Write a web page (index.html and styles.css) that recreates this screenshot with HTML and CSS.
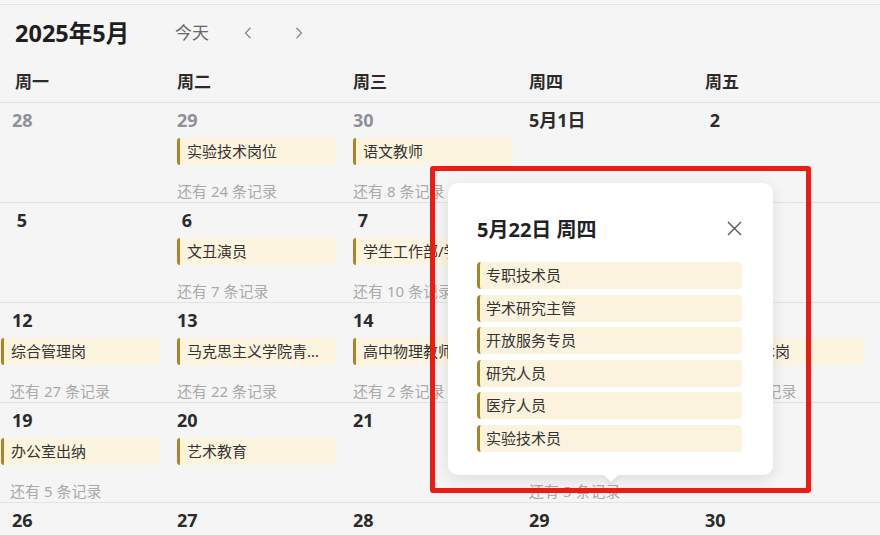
FILE: index.html
```html
<!DOCTYPE html>
<html lang="zh-CN">
<head>
<meta charset="utf-8">
<title>2025年5月</title>
<link rel="stylesheet" href="styles.css">
</head>
<body>
<div class="page">
  <header class="toolbar">
    <h1 class="title">2025年5月</h1>
    <button class="today">今天</button>
    <button class="nav nav-prev" aria-label="上一月">
      <svg width="8" height="12" viewBox="0 0 8 12"><path d="M6.5 0.8 L1.5 6 L6.5 11.2" fill="none" stroke="#8a8a8a" stroke-width="1.3"/></svg>
    </button>
    <button class="nav nav-next" aria-label="下一月">
      <svg width="8" height="12" viewBox="0 0 8 12"><path d="M1.5 0.8 L6.5 6 L1.5 11.2" fill="none" stroke="#8a8a8a" stroke-width="1.3"/></svg>
    </button>
  </header>

  <div class="weekdays">
    <div class="weekday">周一</div>
    <div class="weekday">周二</div>
    <div class="weekday">周三</div>
    <div class="weekday">周四</div>
    <div class="weekday">周五</div>
  </div>

  <div class="week">
    <div class="cell first"><div class="day muted">28</div></div>
    <div class="cell"><div class="day muted">29</div><div class="slot"><div class="event">实验技术岗位</div></div><div class="more">还有 24 条记录</div></div>
    <div class="cell"><div class="day muted">30</div><div class="slot"><div class="event">语文教师</div></div><div class="more">还有 8 条记录</div></div>
    <div class="cell"><div class="day">5月1日</div></div>
    <div class="cell"><div class="day">2</div></div>
  </div>

  <div class="week">
    <div class="cell first"><div class="day">5</div></div>
    <div class="cell"><div class="day">6</div><div class="slot"><div class="event">文丑演员</div></div><div class="more">还有 7 条记录</div></div>
    <div class="cell"><div class="day">7</div><div class="slot"><div class="event">学生工作部/学工处辅导员</div></div><div class="more">还有 10 条记录</div></div>
    <div class="cell"><div class="day">8</div></div>
    <div class="cell"><div class="day">9</div></div>
  </div>

  <div class="week">
    <div class="cell first"><div class="day">12</div><div class="slot"><div class="event">综合管理岗</div></div><div class="more">还有 27 条记录</div></div>
    <div class="cell"><div class="day">13</div><div class="slot"><div class="event">马克思主义学院青年教师</div></div><div class="more">还有 22 条记录</div></div>
    <div class="cell"><div class="day">14</div><div class="slot"><div class="event">高中物理教师</div></div><div class="more">还有 2 条记录</div></div>
    <div class="cell"><div class="day">15</div></div>
    <div class="cell"><div class="day">16</div><div class="slot"><div class="event">专业技术岗</div></div><div class="more">还有 3 条记录</div></div>
  </div>

  <div class="week">
    <div class="cell first"><div class="day">19</div><div class="slot"><div class="event">办公室出纳</div></div><div class="more">还有 5 条记录</div></div>
    <div class="cell"><div class="day">20</div><div class="slot"><div class="event">艺术教育</div></div></div>
    <div class="cell"><div class="day">21</div></div>
    <div class="cell"><div class="day">22</div><div class="slot"></div><div class="more">还有 5 条记录</div></div>
    <div class="cell"><div class="day">23</div></div>
  </div>

  <div class="week">
    <div class="cell first"><div class="day">26</div></div>
    <div class="cell"><div class="day">27</div></div>
    <div class="cell"><div class="day">28</div></div>
    <div class="cell"><div class="day">29</div></div>
    <div class="cell"><div class="day">30</div></div>
  </div>

  <div class="popover">
    <div class="pop-head">
      <div class="pop-title">5月22日 周四</div>
      <button class="pop-close" aria-label="关闭">
        <svg width="15" height="15" viewBox="0 0 15 15"><path d="M1 1 L14 14 M14 1 L1 14" fill="none" stroke="#555" stroke-width="1.4"/></svg>
      </button>
    </div>
    <div class="pop-list">
      <div class="pop-item">专职技术员</div>
      <div class="pop-item">学术研究主管</div>
      <div class="pop-item">开放服务专员</div>
      <div class="pop-item">研究人员</div>
      <div class="pop-item">医疗人员</div>
      <div class="pop-item">实验技术员</div>
    </div>
  </div>

  <div class="highlight"></div>
</div>
</body>
</html>
```

FILE: styles.css
```css
* { box-sizing: border-box; }

html, body {
  margin: 0;
  padding: 0;
}

body {
  background: #f5f5f6;
  font-family: "Noto Sans", "Noto Sans CJK SC", sans-serif;
  color: #333;
  width: 880px;
  height: 535px;
  overflow: hidden;
}

.page {
  position: relative;
  padding-top: 4px;
  height: 535px;
  overflow: hidden;
}

.toolbar {
  display: flex;
  align-items: center;
  height: 57px;
  border-top: 1px solid #e3e3e5;
  padding-left: 15px;
}

.title {
  margin: 0;
  width: 160px;
  font-size: 23.5px;
  font-weight: 700;
  color: #1f1f1f;
  line-height: 30px;
}

.today {
  font-family: inherit;
  font-size: 17px;
  color: #666;
  background: none;
  border: 0;
  padding: 0;
  line-height: 24px;
}

.nav {
  width: 24px;
  height: 24px;
  display: flex;
  align-items: center;
  justify-content: center;
  background: none;
  border: 0;
  padding: 0;
  margin-left: 27px;
}

.weekdays {
  display: grid;
  grid-template-columns: repeat(5, 176px);
  padding-left: 1px;
  height: 42px;
  border-bottom: 1px solid #e3e3e5;
}

.weekday {
  font-size: 17px;
  font-weight: 700;
  line-height: 41px;
  color: #2a2a2a;
}

.weekday:first-child { padding-left: 14px; }

.week {
  display: grid;
  grid-template-columns: repeat(5, 176px);
  padding-left: 1px;
  height: 100px;
  border-bottom: 1px solid #e3e3e5;
}

.cell {
  padding-top: 5px;
  min-width: 0;
}

.day {
  width: fit-content;
  min-width: 20px;
  text-align: center;
  font-size: 18px;
  font-weight: 700;
  line-height: 24px;
  color: #2b2b2b;
}

.day.muted { color: #8e9096; }

.cell.first .day { margin-left: 11px; }

.slot {
  height: 27px;
  margin-top: 6px;
}

.event {
  width: 160px;
  height: 27px;
  border-left: 3px solid #b08424;
  border-radius: 3px;
  background: #fdf4df;
  padding: 0 12px 0 7px;
  font-size: 15px;
  line-height: 27px;
  white-space: nowrap;
  overflow: hidden;
  text-overflow: ellipsis;
  color: #333;
}

.more {
  margin-top: 16px;
  font-size: 15px;
  line-height: 20px;
  color: #a9a9a9;
  white-space: nowrap;
}

.cell.first .more { padding-left: 9px; }

.popover {
  position: absolute;
  left: 448px;
  top: 183px;
  width: 325px;
  padding: 31px 31px 23px 29px;
  background: #fff;
  border-radius: 10px;
  box-shadow: 0 4px 16px rgba(0, 0, 0, 0.10);
}

.popover::after {
  content: "";
  position: absolute;
  left: 158px;
  bottom: -5px;
  width: 10px;
  height: 10px;
  background: #fff;
  transform: rotate(45deg);
  box-shadow: 3px 3px 5px rgba(0, 0, 0, 0.05);
}

.pop-head {
  display: flex;
  align-items: center;
  justify-content: space-between;
  height: 28px;
  margin-bottom: 20px;
}

.pop-title {
  font-size: 20px;
  font-weight: 700;
  color: #222;
}

.pop-close {
  width: 15px;
  height: 15px;
  padding: 0;
  border: 0;
  background: none;
  display: flex;
}

.pop-list {
  display: flex;
  flex-direction: column;
  gap: 5.6px;
}

.pop-item {
  height: 27px;
  border-left: 3px solid #a98427;
  border-radius: 4px;
  background: #fbf3de;
  padding-left: 6px;
  font-size: 15px;
  line-height: 27px;
  color: #333;
}

.highlight {
  position: absolute;
  left: 430px;
  top: 166px;
  width: 381px;
  height: 327px;
  border: 5px solid #ec1c12;
  border-radius: 3px;
  pointer-events: none;
}
```
